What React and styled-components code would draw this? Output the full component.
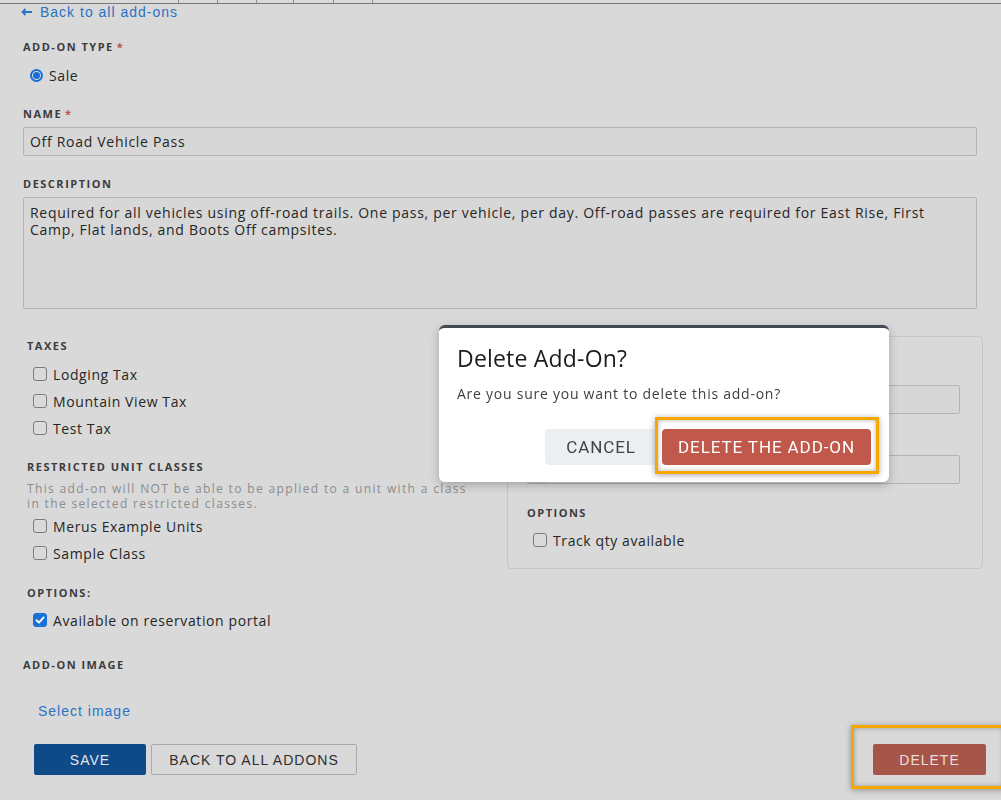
import React from 'react'
import styled, { createGlobalStyle } from 'styled-components'

const GlobalStyle = createGlobalStyle`
    html, body {
        margin: 0;
        padding: 0;
        overflow: hidden;
        background: #d9d9d9;
    }
    body {
        font-family: "Open Sans", "Liberation Sans", sans-serif;
        color: #262626;
    }
    * { box-sizing: border-box; }
`

const Page = styled.div`
    position: relative;
    min-height: 800px;
    padding: 0 24px 0 23px;
`

const TopRule = styled.div`
    display: flex;
    height: 4px;
    margin: 0 -24px 0 -23px;
    border-bottom: 1px solid #7a7a7a;
`

const RuleCell = styled.div`
    width: ${p => p.$w}px;
    flex: ${p => p.$w ? 'none' : '1'};
    border-left: ${p => p.$first ? 'none' : '1px solid #8a8a8a'};
`

const BackLink = styled.a`
    display: flex;
    align-items: center;
    gap: 7px;
    margin-left: -2px;
    height: 16px;
    font-family: "Liberation Sans", Arial, sans-serif;
    font-size: 14px;
    letter-spacing: 1px;
    color: #2a73c4;
    text-decoration: none;
`

const Label = styled.div`
    font-size: 11px;
    line-height: 14px;
    font-weight: 700;
    letter-spacing: 1.5px;
    color: #3c3c3c;
    margin-top: ${p => p.$mt || 0}px;
    margin-bottom: ${p => p.$mb || 0}px;
`

const Required = styled.span`
    color: #b9574f;
    margin-left: 3px;
`

const RadioRow = styled.div`
    display: flex;
    align-items: center;
    gap: 6px;
    height: 20px;
    margin: 11px 0 0 7px;
    font-size: 14px;
    letter-spacing: 0.6px;
`

const Radio = styled.span`
    width: 13px;
    height: 13px;
    border-radius: 50%;
    border: 2px solid #1a6fd6;
    display: flex;
    align-items: center;
    justify-content: center;
    &::after {
        content: '';
        width: 7px;
        height: 7px;
        border-radius: 50%;
        background: #1a6fd6;
    }
`

const TextInput = styled.input`
    display: block;
    width: 100%;
    height: 29px;
    padding: 0 6px;
    border: 1px solid #b4b4b4;
    border-radius: 2px;
    background: #d7d7d7;
    font-family: inherit;
    font-size: 14px;
    letter-spacing: 0.7px;
    color: #262626;
    outline: none;
    margin-top: ${p => p.$mt || 0}px;
`

const TextArea = styled.textarea`
    display: block;
    width: 100%;
    height: 112px;
    padding: 6px 6px;
    border: 1px solid #b4b4b4;
    border-radius: 2px;
    background: #d7d7d7;
    font-family: inherit;
    font-size: 14px;
    line-height: 17px;
    letter-spacing: 0.7px;
    color: #262626;
    resize: none;
    outline: none;
`

const Columns = styled.div`
    display: grid;
    grid-template-columns: 1fr 476px;
    column-gap: 17px;
    margin: 27px -6px 0 0;
`

const LeftCol = styled.div`
    padding: 3px 0 0 4px;
`

const CheckRow = styled.div`
    display: flex;
    align-items: center;
    gap: 6px;
    height: 20px;
    margin-top: ${p => p.$mt ?? 7}px;
    padding-left: 6px;
    font-size: 14px;
    letter-spacing: 0.6px;
    color: #262626;
`

const Box = styled.span`
    width: 14px;
    height: 14px;
    border-radius: 3px;
    border: 1px solid ${p => p.$checked ? '#1a72d8' : '#7c7c7c'};
    background: ${p => p.$checked ? '#1a72d8' : '#dadada'};
    display: flex;
    align-items: center;
    justify-content: center;
    flex: none;
`

const HelpText = styled.div`
    margin-top: 7px;
    font-size: 12px;
    line-height: 15px;
    letter-spacing: 1.35px;
    color: #8c8c8c;
    white-space: nowrap;
`

const Panel = styled.div`
    border: 1px solid #c6c6c6;
    border-radius: 4px;
    padding: 48px 22px 18px 19px;
    align-self: start;
`

const AddonInput = styled.div`
    display: flex;
    height: 29px;
    margin-top: 41px;
    border: 1px solid #b4b4b4;
    border-radius: 2px;
    background: #d7d7d7;
    overflow: hidden;
`

const Addon = styled.span`
    width: 20px;
    background: #cacaca;
    border-right: 1px solid #b4b4b4;
`

const ImageLink = styled.a`
    display: block;
    margin: 31px 0 0 15px;
    height: 16px;
    font-family: "Liberation Sans", Arial, sans-serif;
    font-size: 14px;
    letter-spacing: 1px;
    color: #2a73c4;
    text-decoration: none;
`

const ButtonBar = styled.div`
    display: flex;
    align-items: center;
    margin: 25px -9px 0 11px;
`

const BaseButton = styled.button`
    height: 31px;
    padding: 0;
    border-radius: 2px;
    font-family: "Liberation Sans", Arial, sans-serif;
    font-size: 14px;
    letter-spacing: 1px;
    text-transform: uppercase;
    cursor: pointer;
`

const SaveButton = styled(BaseButton)`
    width: 112px;
    border: none;
    background: #0e4a87;
    color: #e2e6ea;
`

const OutlineButton = styled(BaseButton)`
    width: 206px;
    margin-left: 5px;
    border: 1px solid #aaaaaa;
    background: #d9d9d9;
    color: #2e2e2e;
`

const DeleteButton = styled(BaseButton)`
    width: 113px;
    border: none;
    background: #a85549;
    color: #e8dede;
`

const Highlight = styled.span`
    position: relative;
    display: inline-flex;
    margin-left: ${p => p.$push ? 'auto' : '0'};
    &::after {
        content: '';
        position: absolute;
        top: ${p => p.$t}px;
        left: ${p => p.$l}px;
        right: ${p => p.$r}px;
        bottom: ${p => p.$b}px;
        border: 3px solid #f6a800;
        box-shadow: 0 1px 6px rgba(0, 0, 0, 0.35), inset 0 0 5px rgba(0, 0, 0, 0.3);
        pointer-events: none;
    }
`

const Modal = styled.div`
    position: fixed;
    left: 439px;
    top: 325px;
    width: 450px;
    padding: 16px 18px 17px 18px;
    background: #ffffff;
    border-top: 3px solid #434a54;
    border-radius: 6px;
    box-shadow: 0 3px 10px rgba(0, 0, 0, 0.25);
`

const ModalTitle = styled.h2`
    margin: 0;
    font-size: 23px;
    line-height: 28px;
    font-weight: 400;
    letter-spacing: 0.2px;
    color: #1c1c1c;
`

const ModalText = styled.p`
    margin: 13px 0 0;
    font-size: 14px;
    line-height: 18px;
    letter-spacing: 0.75px;
    color: #404040;
`

const ModalActions = styled.div`
    display: flex;
    justify-content: flex-end;
    gap: 5px;
    margin-top: 26px;
`

const ModalButton = styled.button`
    height: 36px;
    padding: 0;
    border: none;
    border-radius: 4px;
    font-family: Roboto, "Liberation Sans", sans-serif;
    font-size: 17px;
    letter-spacing: 0.9px;
    text-transform: uppercase;
    cursor: pointer;
`

const CancelButton = styled(ModalButton)`
    width: 112px;
    background: #eceff1;
    color: #424242;
`

const ConfirmButton = styled(ModalButton)`
    width: 209px;
    background: #c0594b;
    color: #ffffff;
`

const Check = () => (
    <svg width="10" height="10" viewBox="0 0 10 10">
        <path d="M1.5 5.2 L4 7.6 L8.6 2.4" fill="none" stroke="#fff" strokeWidth="1.9" strokeLinecap="round" strokeLinejoin="round" />
    </svg>
)

const CheckItem = ({ label, checked, mt }) => (
    <CheckRow $mt={mt}>
        <Box $checked={checked}>{checked && <Check />}</Box>
        {label}
    </CheckRow>
)

const ruleCells = [178, 39, 39, 37, 40, 39]

export default function App() {
    return (
        <>
            <GlobalStyle />
            <Page>
                <TopRule>
                    {ruleCells.map((w, i) => <RuleCell key={i} $w={w} $first={i === 0} />)}
                    <RuleCell />
                </TopRule>

                <BackLink href="#">
                    <svg width="12" height="8" viewBox="0 0 12 8">
                        <path d="M11 4H2M4.5 1L1.5 4L4.5 7" fill="none" stroke="#2a73c4" strokeWidth="1.8" />
                    </svg>
                    Back to all add-ons
                </BackLink>

                <Label $mt={20}>ADD-ON TYPE<Required>*</Required></Label>
                <RadioRow><Radio />Sale</RadioRow>

                <Label $mt={22} $mb={6}>NAME<Required>*</Required></Label>
                <TextInput readOnly value="Off Road Vehicle Pass" />

                <Label $mt={21} $mb={6}>DESCRIPTION</Label>
                <TextArea
                    readOnly
                    value="Required for all vehicles using off-road trails. One pass, per vehicle, per day. Off-road passes are required for East Rise, First Camp, Flat lands, and Boots Off campsites."
                />

                <Columns>
                    <LeftCol>
                        <Label>TAXES</Label>
                        <CheckItem label="Lodging Tax" mt={11} />
                        <CheckItem label="Mountain View Tax" />
                        <CheckItem label="Test Tax" />

                        <Label $mt={22}>RESTRICTED UNIT CLASSES</Label>
                        <HelpText>
                            This add-on will NOT be able to be applied to a unit with a class<br />
                            in the selected restricted classes.
                        </HelpText>
                        <CheckItem label="Merus Example Units" mt={5} />
                        <CheckItem label="Sample Class" />

                        <Label $mt={23}>OPTIONS:</Label>
                        <CheckItem label="Available on reservation portal" checked mt={10} />
                    </LeftCol>

                    <Panel>
                        <TextInput readOnly value="" />
                        <AddonInput><Addon /></AddonInput>
                        <Label $mt={22}>OPTIONS</Label>
                        <CheckItem label="Track qty available" mt={10} />
                    </Panel>
                </Columns>

                <Label $mt={28}>ADD-ON IMAGE</Label>
                <ImageLink href="#">Select image</ImageLink>

                <ButtonBar>
                    <SaveButton>Save</SaveButton>
                    <OutlineButton>Back to all addons</OutlineButton>
                    <Highlight $push $t={-19} $l={-22} $r={-20} $b={-14}>
                        <DeleteButton>Delete</DeleteButton>
                    </Highlight>
                </ButtonBar>
            </Page>

            <Modal role="dialog">
                <ModalTitle>Delete Add-On?</ModalTitle>
                <ModalText>Are you sure you want to delete this add-on?</ModalText>
                <ModalActions>
                    <CancelButton>Cancel</CancelButton>
                    <Highlight $t={-12} $l={-7} $r={-8} $b={-9}>
                        <ConfirmButton>Delete the add-on</ConfirmButton>
                    </Highlight>
                </ModalActions>
            </Modal>
        </>
    )
}
